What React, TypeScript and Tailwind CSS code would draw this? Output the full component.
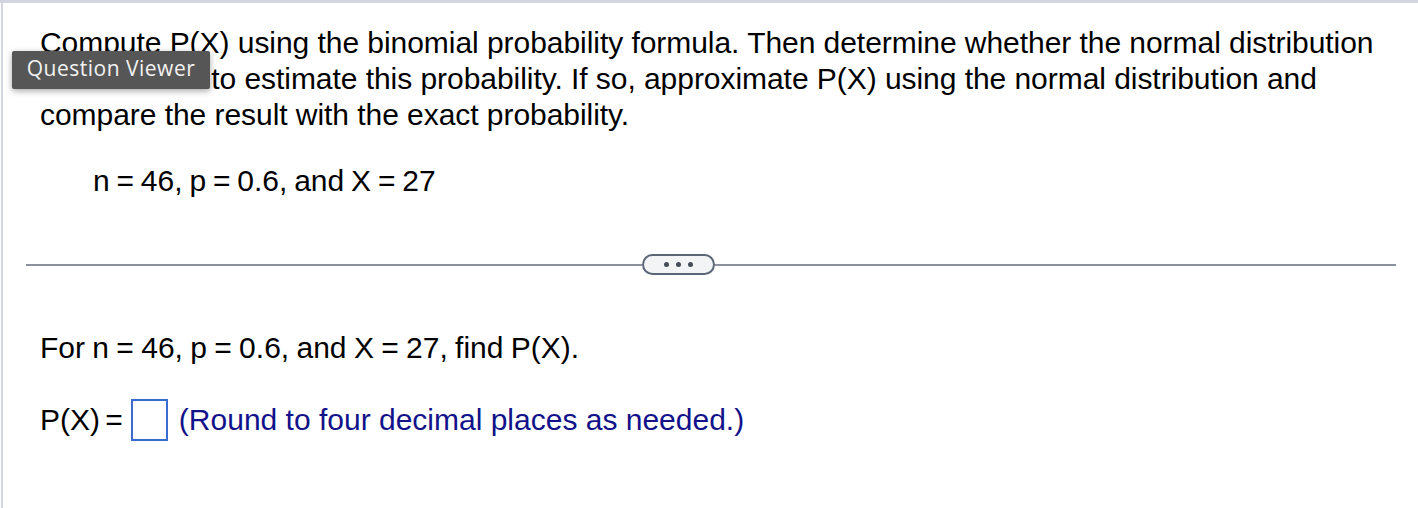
export default function App() {
  return (
    <div className="relative h-[508px] w-[1418px] overflow-hidden bg-white border-t-[3px] border-[#d3d6e1] font-['Liberation_Sans',Arial,sans-serif] text-black">
      <div className="ml-px h-full border-l-2 border-[#d3d6e1] pt-[22px]">
        <div className="pl-[37px]">
          <p className="w-[1360px] text-[30px] leading-[36px] tracking-[-0.05px]">
            Compute P(X) using the binomial probability formula. Then determine whether the normal distribution can be used to
            estimate this probability. If so, approximate P(X) using the normal distribution and compare the result with the exact
            probability.
          </p>
          <p className="mt-[30px] pl-[53px] text-[30px] leading-[36px] [word-spacing:-1.5px]">n = 46, p = 0.6, and X = 27</p>
        </div>

        <div className="mt-[55px] ml-[23px] flex w-[1370px] items-center">
          <div className="h-[2px] w-[616px] bg-[#8b919e]" />
          <div className="flex h-[21px] w-[73px] items-center justify-center gap-[7px] rounded-full border-2 border-[#5b6677] bg-[#f3f4f6]">
            <span className="h-[5px] w-[5px] rounded-full bg-[#454c58]" />
            <span className="h-[5px] w-[5px] rounded-full bg-[#454c58]" />
            <span className="h-[5px] w-[5px] rounded-full bg-[#454c58]" />
          </div>
          <div className="h-[2px] flex-1 bg-[#8b919e]" />
        </div>

        <div className="pl-[37px]">
          <p className="mt-[55px] text-[30px] leading-[36px] [word-spacing:-1px]">For n = 46, p = 0.6, and X = 27, find P(X).</p>
          <div className="mt-[33px] flex items-center text-[30px] leading-[36px]">
            <span className="[word-spacing:-3px]">P(X) =</span>
            <span className="ml-[8px] h-[42px] w-[37px] border-2 border-[#3a6bcf] bg-white" />
            <span className="ml-[11px] text-[#12128a]">(Round to four decimal places as needed.)</span>
          </div>
        </div>
      </div>

      <div className="absolute left-[12px] top-[48px] flex h-[38px] w-[198px] items-center justify-center rounded-[2px] bg-[#565656] pb-[3px] font-['Open_Sans',sans-serif] text-[21px] tracking-[0.5px] text-[#f2f2f2] shadow-[0_2px_6px_rgba(0,0,0,0.35)]">
        Question Viewer
      </div>
    </div>
  );
}
